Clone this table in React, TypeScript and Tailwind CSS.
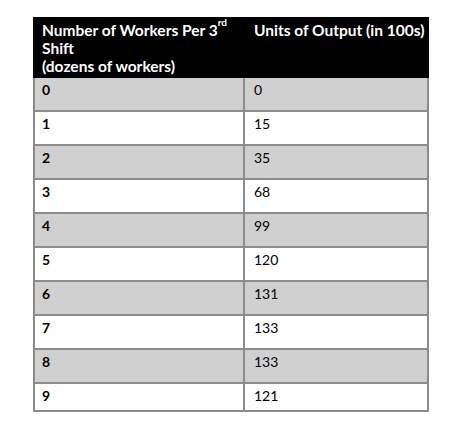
import React from "react";

const rows: [string, string][] = [
  ["0", "0"],
  ["1", "15"],
  ["2", "35"],
  ["3", "68"],
  ["4", "99"],
  ["5", "120"],
  ["6", "131"],
  ["7", "133"],
  ["8", "133"],
  ["9", "121"],
];

export default function App() {
  return (
    <div
      className="w-[474px] h-[425px] bg-white pt-[17px] pl-[33px]"
      style={{ fontFamily: "Lato, 'Liberation Sans', sans-serif" }}
    >
      <div className="w-[396px]">
        <div className="flex bg-black text-white font-bold text-[15.5px] leading-[18px] h-[61px] whitespace-nowrap">
          <div className="w-[212px] pl-[9px] pt-[4px]">
            Number of Workers Per 3<sup className="text-[10px] align-[5px]">rd</sup>
            <br />
            Shift
            <br />
            (dozens of workers)
          </div>
          <div className="flex-1 pl-[9px] pt-[4px]">Units of Output (in 100s)</div>
        </div>
        <div className="border-l-2 border-r-2 border-b-2 border-[#8c8c8c]">
          {rows.map(([a, b], i) => (
            <div
              key={i}
              className={`flex text-[14px] leading-[18px] text-black ${
                i % 2 === 0 ? "bg-[#d0d0d0]" : "bg-white"
              } ${i === rows.length - 1 ? "h-[26px]" : "h-[34px] border-b-2 border-[#8c8c8c]"}`}
            >
              <div className="w-[210px] border-r-2 border-[#8c8c8c] pl-[7px] pt-[3px] font-bold">
                {a}
              </div>
              <div className="flex-1 pl-[9px] pt-[3px]">{b}</div>
            </div>
          ))}
        </div>
      </div>
    </div>
  );
}
